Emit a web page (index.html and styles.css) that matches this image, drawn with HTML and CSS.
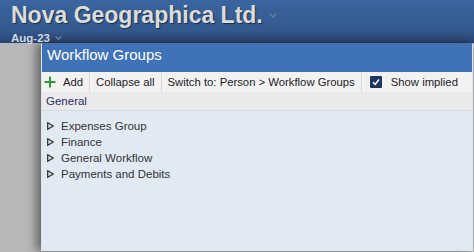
FILE: index.html
```html
<!DOCTYPE html>
<html lang="en">
<head>
<meta charset="UTF-8" />
<title>Workflow Groups</title>
<link rel="stylesheet" href="styles.css">
</head>
<body>

<div class="top">
  <div class="company">Nova Geographica Ltd.<svg class="caret big" width="8" height="5" viewBox="0 0 8 5"><polyline points="0.5,0.5 4,4 7.5,0.5" /></svg></div>
  <div class="period">Aug-23<svg class="caret" width="7" height="4" viewBox="0 0 7 4"><polyline points="0.5,0.5 3.5,3.3 6.5,0.5" /></svg></div>
</div>

<div class="desk">
  <div class="dialog">
    <div class="dlg-title">Workflow Groups</div>

    <div class="toolbar">
      <span class="tool add">
        <svg width="12" height="12" viewBox="0 0 12 12"><path d="M6 0.5v11M0.5 6h11" /></svg>
        Add
      </span>
      <span class="tool">Collapse all</span>
      <span class="tool">Switch to: Person &gt; Workflow Groups</span>
      <span class="tool check">
        <span class="box"><svg width="10" height="10" viewBox="0 0 10 10"><polyline points="2,5.2 4.2,7.4 8,2.6" /></svg></span>
        Show implied
      </span>
    </div>

    <div class="crumb">General</div>

    <ul class="tree">
      <li><svg width="7" height="8" viewBox="0 0 7 8"><polygon points="0.7,0.7 6.2,4 0.7,7.3" /></svg>Expenses Group</li>
      <li><svg width="7" height="8" viewBox="0 0 7 8"><polygon points="0.7,0.7 6.2,4 0.7,7.3" /></svg>Finance</li>
      <li><svg width="7" height="8" viewBox="0 0 7 8"><polygon points="0.7,0.7 6.2,4 0.7,7.3" /></svg>General Workflow</li>
      <li><svg width="7" height="8" viewBox="0 0 7 8"><polygon points="0.7,0.7 6.2,4 0.7,7.3" /></svg>Payments and Debits</li>
    </ul>
  </div>
</div>

</body>
</html>
```

FILE: styles.css
```css
html, body { margin: 0; height: 100%; overflow: hidden; }
body { font-family: "Liberation Sans", Arial, sans-serif; background: #b8b8b8; }

.top { height: 43px; background: linear-gradient(#3a65a0, #33598e 70%, #2a4470); }
.company { padding: 2px 0 0 11px; font-size: 23px; line-height: 26px; font-weight: bold; color: #dcdcdc; text-shadow: 1px 1px 1px #1c2e4a; }
.period { margin-top: 3px; padding-left: 11px; font-size: 11.5px; line-height: 14px; font-weight: bold; color: #cfd8e6; }
.caret { fill: none; stroke: #6b7f9c; stroke-width: 1.4; margin-left: 5px; vertical-align: 2px; }
.caret.big { margin-left: 6px; vertical-align: 5px; }

.desk { height: calc(100% - 43px); }
.dialog { margin-left: 41px; width: 430px; height: 206px; border: 1px solid #dde5ee; border-top-color: #4f6d98; background: #e1eaf3; box-shadow: -5px 0 9px rgba(0,0,0,0.45); font-size: 11.5px; }

.dlg-title { height: 28px; padding-left: 5px; box-sizing: border-box; background: #4072b7; color: #fff; font-size: 15px; line-height: 22px; }

.toolbar { display: flex; height: 20px; line-height: 20px; background: #f2f2f2; color: #222; font-size: 11.3px; }
.tool { display: flex; align-items: center; padding: 0 6px; border-right: 1px solid #d9d9d9; white-space: nowrap; }
.tool.add { padding-left: 2px; gap: 7px; }
.tool.add svg { fill: none; stroke: #2f9a35; stroke-width: 2; }
.tool.check { padding-left: 8px; gap: 9px; border-right: none; }
.box { display: flex; align-items: center; justify-content: center; width: 12px; height: 12px; background: #1e3662; border-radius: 1px; }
.box svg { fill: none; stroke: #fff; stroke-width: 1.6; }

.crumb { padding-left: 4px; line-height: 18px; background: #eaeaea; border-bottom: 1px solid #d6dbe1; color: #2a2d62; }

.tree { list-style: none; margin: 0; padding: 7px 0 0 5px; color: #333; }
.tree li { display: flex; align-items: center; gap: 7px; line-height: 16px; }
.tree svg { fill: none; stroke: #333; stroke-width: 1.3; }
```
